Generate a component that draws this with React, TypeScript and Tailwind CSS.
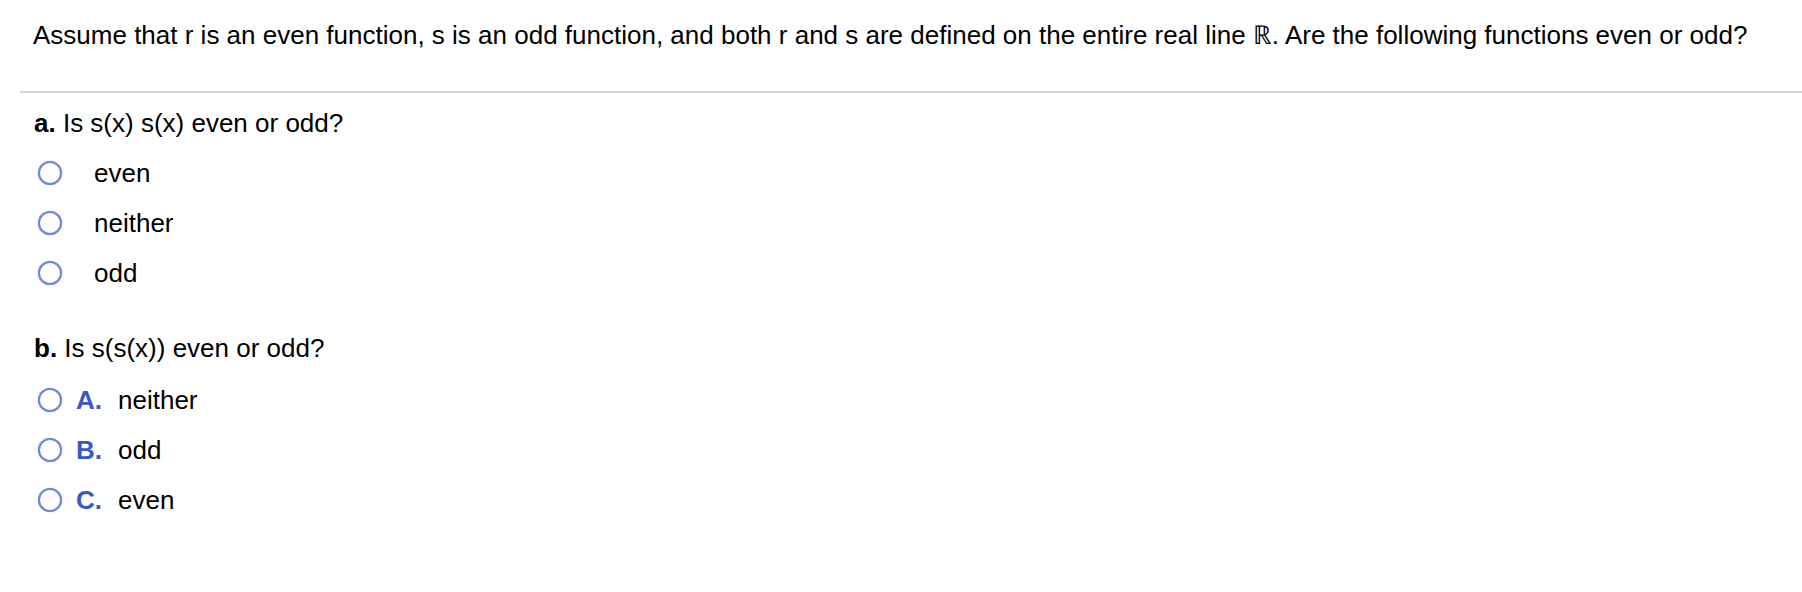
const font = { fontFamily: '"Liberation Sans", Arial, sans-serif' };

function Radio() {
  return (
    <span className="inline-block h-[24px] w-[24px] shrink-0 rounded-full border-[2.5px] border-[#7088da] bg-white shadow-[0_0_1px_#7088da]" />
  );
}

const partA = ['even', 'neither', 'odd'];
const partB = [
  { letter: 'A.', text: 'neither' },
  { letter: 'B.', text: 'odd' },
  { letter: 'C.', text: 'even' },
];

export default function App() {
  return (
    <div className="h-[592px] w-[1802px] bg-white text-[26px] leading-[30px] text-black" style={font}>
      <div className="pl-[33px] pt-[20px]">
        Assume that r is an even function, s is an odd function, and both r and s are defined on the entire real
        line ℝ. Are the following functions even or odd?
      </div>

      <div className="ml-[20px] mt-[41px] h-[2px] bg-[#d2d5df]" />

      <div className="pl-[34px] pt-[15px]">
        <b>a.</b> Is s(x) s(x) even or odd?
      </div>
      <div className="mt-[20px] flex flex-col gap-[20px] pl-[38px]">
        {partA.map((t) => (
          <label key={t} className="flex h-[30px] items-center">
            <Radio />
            <span className="ml-[32px]">{t}</span>
          </label>
        ))}
      </div>

      <div className="pl-[34px] pt-[45px]">
        <b>b.</b> Is s(s(x)) even or odd?
      </div>
      <div className="mt-[22px] flex flex-col gap-[20px] pl-[38px]">
        {partB.map((o) => (
          <label key={o.letter} className="flex h-[30px] items-center">
            <Radio />
            <span className="ml-[14px] w-[42px] font-bold text-[#3a57c6]">{o.letter}</span>
            <span>{o.text}</span>
          </label>
        ))}
      </div>
    </div>
  );
}
